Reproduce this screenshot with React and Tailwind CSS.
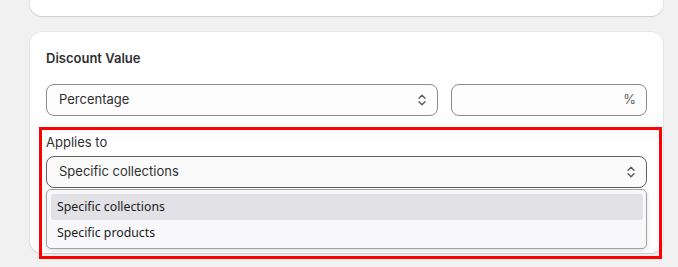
import React from "react";

function UpDown() {
  return (
    <svg width="10" height="14" viewBox="0 0 10 14" fill="none" stroke="#5c5c5c" strokeWidth="1.4" strokeLinecap="round" strokeLinejoin="round">
      <path d="M2 5.2 L5 2.2 L8 5.2" />
      <path d="M2 8.8 L5 11.8 L8 8.8" />
    </svg>
  );
}

export default function App() {
  return (
    <div className="min-h-screen bg-[#f1f1f1] pl-[30px] overflow-hidden" style={{ fontFamily: "Inter, 'Liberation Sans', sans-serif" }}>
      <div className="w-[633px]">
        <div className="h-[16px] bg-white rounded-b-[12px] shadow-[0_1px_1px_rgba(0,0,0,0.12),0_0_0_1px_rgba(0,0,0,0.03)]" />
        <div className="relative mt-[16px] bg-white rounded-t-[12px] rounded-b-[12px] px-4 pt-4 pb-[4px] shadow-[0_1px_1px_rgba(0,0,0,0.12),0_0_0_1px_rgba(0,0,0,0.04)]">
          <h2 className="text-[13px] leading-5 font-semibold text-[#303030]">Discount Value</h2>
          <div className="mt-4 grid grid-cols-[2fr_1fr] gap-[13px]">
            <div className="h-[32px] rounded-lg border border-[#8a8a8a] bg-[#fdfdfd] flex items-center justify-between pl-3 pr-[10px]">
              <span className="text-[13px] text-[#303030]">Percentage</span>
              <UpDown />
            </div>
            <div className="h-[32px] rounded-lg border border-[#8a8a8a] bg-[#fdfdfd] flex items-center justify-end pr-[10px]">
              <span className="text-[13px] text-[#616161]">%</span>
            </div>
          </div>
          <div className="mt-4">
            <div className="text-[13px] leading-5 text-[#303030]">Applies to</div>
            <div className="mt-1 h-[32px] rounded-lg border border-[#616161] bg-[#fafafa] flex items-center justify-between pl-3 pr-[10px]">
              <span className="text-[13px] text-[#303030]">Specific collections</span>
              <UpDown />
            </div>
            <div className="mt-[1px] rounded-[5px] border border-[#a3a3a3] bg-[#f8f8fa] pt-[4px] pb-[2px] pr-[3px] pl-[4px] shadow-[0_2px_4px_rgba(0,0,0,0.12)]" style={{ fontFamily: "'Noto Sans', 'Open Sans', sans-serif" }}>
              <div className="h-[26px] rounded-[3px] bg-[#e1e1e6] flex items-center px-[6px] text-[12.3px] text-[#1a1a1a]">Specific collections</div>
              <div className="h-[26px] flex items-center px-[6px] text-[12.3px] text-[#1a1a1a]">Specific products</div>
            </div>
          </div>
          <div className="absolute left-[9px] top-[95px] w-[623px] h-[132px] border-[3px] border-[#ff0000] pointer-events-none" />
        </div>
      </div>
    </div>
  );
}
